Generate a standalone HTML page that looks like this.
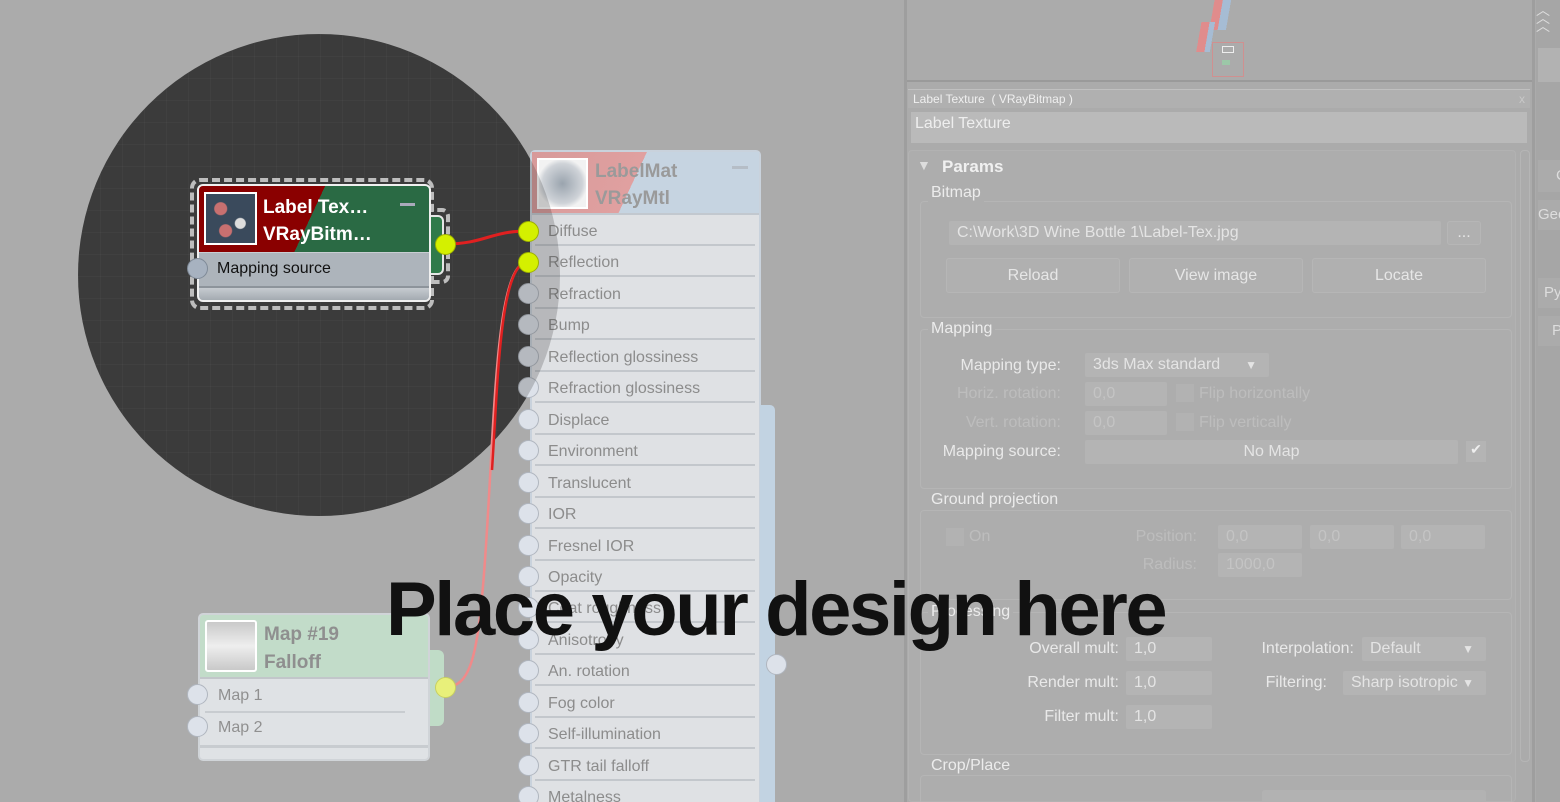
<!DOCTYPE html>
<html><head><meta charset="utf-8"><style>
*{margin:0;padding:0;box-sizing:border-box}
html,body{width:1560px;height:802px;overflow:hidden}
body{background:#ababab;font-family:"Liberation Sans",sans-serif;position:relative}
.a{position:absolute}
.grid{background-image:linear-gradient(rgba(255,255,255,.04) 1px,transparent 1px),linear-gradient(90deg,rgba(255,255,255,.04) 1px,transparent 1px);background-size:22px 22px}
.row{position:absolute;left:5px;width:220px;height:31px;border-bottom:2px solid #c3c7cc;font-size:16px;color:#8c8c8c;line-height:33px;padding-left:13px}
.sock{position:absolute;width:21px;height:21px;border-radius:50%;background:#dde2ea;border:1px solid #b0b6bf}
.pt{color:#e9e9e9;font-size:16px;position:absolute;white-space:nowrap}
.dim{color:#bdbdbd}
.fld{position:absolute;background:#b4b4b4;border-radius:2px;color:#e4e4e4;font-size:16px;line-height:24px;padding-left:8px}
.btn{position:absolute;background:#b0b0b0;border:1px solid #b6b6b6;border-radius:3px;color:#e6e6e6;font-size:16px;text-align:center;line-height:33px}
.grp{position:absolute;border:1px solid #b5b5b5;border-radius:4px}
.gl{position:absolute;background:#adadad;color:#ececec;font-size:16px;padding:0 3px}
</style></head><body>
<div class="a grid" style="left:78px;top:34px;width:482px;height:482px;border-radius:50%;background-color:#404040"></div>

<div class="a" style="left:530px;top:150px;width:231px;height:660px;background:#dfe1e4;border:2px solid #c9d2dc;border-radius:5px">
 <div class="a" style="left:0;top:0;width:227px;height:63px;background:linear-gradient(115deg,#d79a9a 0,#e0a0a0 45%,#c6d4e1 45%,#c6d4e1 100%);border-bottom:2px solid #c2c8cf"></div>
 <div class="a" style="left:5px;top:6px;width:51px;height:51px;background:radial-gradient(circle at 50% 50%,#9aa4ae,#cfd3d8 60%,#f2f2f2 75%);border:2px solid #fff"></div>
 <div class="a" style="left:63px;top:6px;font-size:19px;font-weight:bold;color:#9a9a9a;line-height:27px">LabelMat<br>VRayMtl</div>
 <div class="a" style="left:200px;top:14px;width:16px;height:3px;background:#b5bdc6"></div>
</div>
<div class="a" style="left:760px;top:405px;width:15px;height:400px;background:#c2d3e2;border-radius:0 5px 0 0"></div>
<div class="sock" style="left:766px;top:654px"></div>
<div id="rows"></div>

<div class="a" style="left:78px;top:34px;width:482px;height:482px;border-radius:50%;background:rgba(40,40,40,.22)"></div>

<svg class="a" style="left:0;top:0" width="905" height="802">
 <path d="M445,244 C485,244 490,231 528,231" stroke="#e02020" stroke-width="3" fill="none"/>
 <path d="M528,262 C495,262 495,420 485,560 C478,660 470,687 445,687" stroke="#f08a8a" stroke-width="2.5" fill="none"/>
 <path d="M528,262 C500,262 498,380 492,470" stroke="#e02020" stroke-width="2.5" fill="none"/>
</svg>

<div class="a" style="left:190px;top:178px;width:244px;height:132px;border:4px dashed #bdbdbd;border-radius:10px"></div>
<div class="a" style="left:425px;top:208px;width:25px;height:76px;border:4px dashed #bdbdbd;border-radius:0 8px 8px 0;border-left:none"></div>
<div class="a" style="left:428px;top:215px;width:16px;height:60px;background:#2f7a4a;border:2px solid #e6e6e6;border-left:none;border-radius:0 6px 6px 0"></div>
<div class="a" style="left:197px;top:184px;width:234px;height:118px;background:#adb4bb;border:2px solid #f0f0f0;border-radius:6px;overflow:hidden">
 <div class="a" style="left:0;top:0;width:232px;height:66px;background:linear-gradient(115deg,#8a0000 0,#8a0000 48%,#2a6a44 48%)"></div>
 <div class="a" style="left:5px;top:6px;width:53px;height:53px;background:radial-gradient(circle at 30% 30%,#c87070 0 6px,transparent 7px),radial-gradient(circle at 70% 60%,#dddddd 0 5px,transparent 6px),radial-gradient(circle at 40% 75%,#c87070 0 6px,transparent 7px),#3a4a5c;border:2px solid #fff"></div>
 <div class="a" style="left:64px;top:8px;font-size:19px;font-weight:bold;color:#fff;line-height:27px">Label Tex…<br>VRayBitm…</div>
 <div class="a" style="left:201px;top:17px;width:15px;height:3px;background:#aab"></div>
 <div class="a" style="left:0;top:66px;width:232px;height:1px;background:#c9ced3"></div>
 <div class="a" style="left:18px;top:74px;font-size:16px;color:#111">Mapping source</div>
 <div class="a" style="left:0;top:100px;width:232px;height:2px;background:#8d949b"></div>
 <div class="a" style="left:0;top:102px;width:232px;height:14px;background:linear-gradient(#c6cbd0,#9ea5ac)"></div>
</div>
<div class="sock" style="left:187px;top:258px;background:#a7b2c0;border-color:#7f8a97"></div>
<div class="sock" style="left:435px;top:234px;background:#d4f000;border-color:#9db000"></div>
<div class="sock" style="left:518px;top:221px;background:#d4f000;border-color:#9db000"></div>
<div class="sock" style="left:518px;top:252px;background:#d4f000;border-color:#9db000"></div>

<div class="a" style="left:428px;top:650px;width:16px;height:76px;background:#c0dcc7;border-radius:0 6px 6px 0"></div>
<div class="a" style="left:198px;top:613px;width:232px;height:148px;background:#dfe2e5;border:2px solid #d0d4d8;border-radius:5px;overflow:hidden">
 <div class="a" style="left:0;top:0;width:230px;height:64px;background:#c2dcc9;border-bottom:2px solid #c2c6ca"></div>
 <div class="a" style="left:5px;top:5px;width:52px;height:52px;background:linear-gradient(#c9c9c9,#eeeeee 50%,#c9c9c9);border:2px solid #fff;border-radius:3px"></div>
 <div class="a" style="left:64px;top:6px;font-size:19px;font-weight:bold;color:#8f8f8f;line-height:28px">Map #19<br>Falloff</div>
 <div class="a" style="left:5px;top:96px;width:200px;height:2px;background:#c8ccd0"></div>
 <div class="a" style="left:18px;top:72px;font-size:16px;color:#909090">Map 1</div>
 <div class="a" style="left:18px;top:104px;font-size:16px;color:#909090">Map 2</div>
 <div class="a" style="left:0;top:130px;width:230px;height:3px;background:#c8ccd0"></div>
</div>
<div class="sock" style="left:187px;top:684px"></div>
<div class="sock" style="left:187px;top:716px"></div>
<div class="sock" style="left:435px;top:677px;background:#e8f07a;border-color:#c8d060"></div>

<div class="a" style="left:904px;top:0;width:3px;height:802px;background:#9e9e9e"></div>
<div class="a" style="left:907px;top:0;width:626px;height:82px;background:#ababab;border-bottom:2px solid #9a9a9a"></div>
<div class="a" style="left:1198px;top:0;width:50px;height:30px;background:linear-gradient(100deg,transparent 30%,#e08c8c 30%,#e08c8c 45%,#a6bcd4 45%,#a6bcd4 60%,transparent 60%)"></div>
<div class="a" style="left:1196px;top:22px;width:22px;height:30px;background:linear-gradient(100deg,transparent 20%,#e08c8c 20%,#e08c8c 50%,#a6bcd4 50%,#a6bcd4 70%,transparent 70%)"></div>
<div class="a" style="left:1212px;top:42px;width:32px;height:35px;border:1px solid #d09090"></div>
<div class="a" style="left:1222px;top:46px;width:12px;height:7px;border:1px solid #eee"></div>
<div class="a" style="left:1222px;top:60px;width:8px;height:5px;background:#9cc8a8"></div>
<div class="a" style="left:1532px;top:0;width:3px;height:802px;background:#9e9e9e"></div>
<div class="a" style="left:1536px;top:0;width:24px;height:802px;background:#a6a6a6"></div>
<div class="a" style="left:1536px;top:6px;font-size:14px;color:#ddd;line-height:8px">︿<br>︿<br>︿</div>
<div class="a" style="left:1538px;top:48px;width:22px;height:34px;background:#b2b2b2"></div>
<div class="a" style="left:1538px;top:160px;width:22px;height:32px;background:#ababab;color:#ddd;font-size:15px;line-height:32px;padding-left:18px">C</div>
<div class="a" style="left:1538px;top:200px;width:22px;height:30px;background:#ababab;color:#ddd;font-size:15px;line-height:30px">Geo</div>
<div class="a" style="left:1538px;top:278px;width:22px;height:30px;background:#ababab;color:#ddd;font-size:15px;line-height:30px;padding-left:6px">Py</div>
<div class="a" style="left:1538px;top:316px;width:22px;height:30px;background:#ababab;color:#ddd;font-size:15px;line-height:30px;padding-left:14px">P</div>

<div class="a" style="left:908px;top:89px;width:622px;height:19px;background:#b0b0b0;border-top:1px solid #c0c0c0;font-size:12px;color:#efefef;line-height:18px;padding-left:5px">Label Texture &nbsp;( VRayBitmap )<span style="position:absolute;right:5px;color:#c8c8c8">x</span></div>
<div class="a" style="left:911px;top:112px;width:616px;height:31px;background:#bababa;color:#eee;font-size:16px;line-height:24px;padding-left:4px">Label Texture</div>
<div class="a" style="left:908px;top:150px;width:608px;height:652px;background:#adadad;border:1px solid #b2b2b2;border-radius:4px"></div>
<div class="a" style="left:1520px;top:150px;width:10px;height:612px;border:1px solid #b5b5b5;border-radius:4px"></div>
<div class="a" style="left:917px;top:157px;color:#ddd;font-size:14px">▼</div>
<div class="a" style="left:942px;top:157px;color:#f0f0f0;font-size:17px;font-weight:bold">Params</div>

<div class="grp" style="left:920px;top:201px;width:592px;height:117px"></div>
<div class="gl" style="left:928px;top:184px">Bitmap</div>
<div class="fld" style="left:949px;top:221px;width:492px">C:\Work\3D Wine Bottle 1\Label-Tex.jpg</div>
<div class="btn" style="left:1447px;top:221px;width:34px;height:24px;line-height:22px">...</div>
<div class="btn" style="left:946px;top:258px;width:174px">Reload</div>
<div class="btn" style="left:1129px;top:258px;width:174px">View image</div>
<div class="btn" style="left:1312px;top:258px;width:174px">Locate</div>

<div class="grp" style="left:920px;top:329px;width:592px;height:160px"></div>
<div class="gl" style="left:928px;top:320px">Mapping</div>
<div class="pt" style="right:499px;top:357px">Mapping type:</div>
<div class="fld" style="left:1085px;top:353px;width:184px;height:24px">3ds Max standard<span style="position:absolute;right:12px;font-size:12px">▼</span></div>
<div class="pt dim" style="right:499px;top:385px">Horiz. rotation:</div>
<div class="fld dim" style="left:1085px;top:382px;width:82px;color:#c4c4c4">0,0</div>
<div class="a" style="left:1176px;top:384px;width:18px;height:18px;background:#b2b2b2"></div>
<div class="pt dim" style="left:1199px;top:385px">Flip horizontally</div>
<div class="pt dim" style="right:499px;top:414px">Vert. rotation:</div>
<div class="fld dim" style="left:1085px;top:411px;width:82px;color:#c4c4c4">0,0</div>
<div class="a" style="left:1176px;top:413px;width:18px;height:18px;background:#b2b2b2"></div>
<div class="pt dim" style="left:1199px;top:414px">Flip vertically</div>
<div class="pt" style="right:499px;top:443px">Mapping source:</div>
<div class="fld" style="left:1085px;top:440px;width:373px;text-align:center;padding:0">No Map</div>
<div class="a" style="left:1466px;top:441px;width:20px;height:21px;background:#b4b4b4;color:#eee;font-size:14px;text-align:center">✔</div>

<div class="grp" style="left:920px;top:510px;width:592px;height:90px"></div>
<div class="gl" style="left:928px;top:491px">Ground projection</div>
<div class="a" style="left:946px;top:528px;width:18px;height:18px;background:#b2b2b2"></div>
<div class="pt dim" style="left:969px;top:528px">On</div>
<div class="pt dim" style="right:363px;top:528px">Position:</div>
<div class="fld dim" style="left:1218px;top:525px;width:84px;color:#c4c4c4">0,0</div>
<div class="fld dim" style="left:1310px;top:525px;width:84px;color:#c4c4c4">0,0</div>
<div class="fld dim" style="left:1401px;top:525px;width:84px;color:#c4c4c4">0,0</div>
<div class="pt dim" style="right:363px;top:556px">Radius:</div>
<div class="fld dim" style="left:1218px;top:553px;width:84px;color:#c4c4c4">1000,0</div>

<div class="grp" style="left:920px;top:612px;width:592px;height:143px"></div>
<div class="gl" style="left:928px;top:603px">Processing</div>
<div class="pt" style="right:441px;top:640px">Overall mult:</div>
<div class="fld" style="left:1126px;top:637px;width:86px">1,0</div>
<div class="pt" style="right:441px;top:674px">Render mult:</div>
<div class="fld" style="left:1126px;top:671px;width:86px">1,0</div>
<div class="pt" style="right:441px;top:708px">Filter mult:</div>
<div class="fld" style="left:1126px;top:705px;width:86px">1,0</div>
<div class="pt" style="right:206px;top:640px">Interpolation:</div>
<div class="fld" style="left:1362px;top:637px;width:124px">Default<span style="position:absolute;right:12px;font-size:12px">▼</span></div>
<div class="pt" style="right:233px;top:674px">Filtering:</div>
<div class="fld" style="left:1343px;top:671px;width:143px">Sharp isotropic<span style="position:absolute;right:12px;font-size:12px">▼</span></div>

<div class="grp" style="left:920px;top:775px;width:592px;height:40px"></div>
<div class="gl" style="left:928px;top:757px">Crop/Place</div>
<div class="a" style="left:1262px;top:790px;width:224px;height:20px;background:#b2b2b2;border-radius:3px"></div>

<div class="a" style="left:386px;top:572px;font-size:76px;line-height:76px;font-weight:bold;color:#111;letter-spacing:-2.4px;white-space:nowrap">Place your design here</div>

<script>
var n=["Diffuse","Reflection","Refraction","Bump","Reflection glossiness","Refraction glossiness","Displace","Environment","Translucent","IOR","Fresnel IOR","Opacity","Coat roughness","Anisotropy","An. rotation","Fog color","Self-illumination","GTR tail falloff","Metalness"];
var h="";for(var i=0;i<n.length;i++){var y=215+i*31.45;
h+='<div class="row" style="left:535px;top:'+y+'px">'+n[i]+'</div>';
if(i>1)h+='<div class="sock" style="left:518px;top:'+(y+5)+'px"></div>';}
document.getElementById("rows").innerHTML=h;
</script>
</body></html>
